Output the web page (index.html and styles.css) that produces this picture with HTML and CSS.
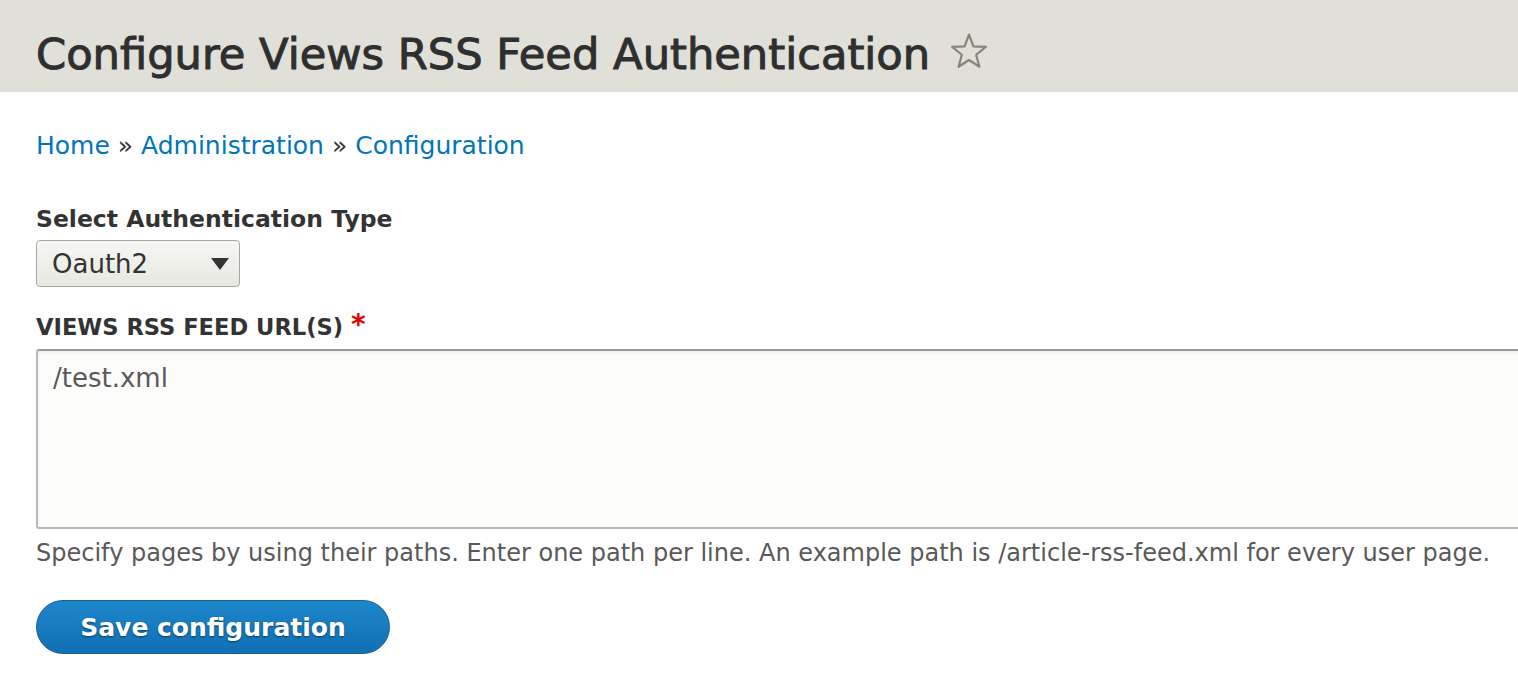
FILE: index.html
```html
<!DOCTYPE html>
<html lang="en">
<head>
<meta charset="utf-8">
<title>Configure Views RSS Feed Authentication</title>
<link rel="stylesheet" href="styles.css">
</head>
<body>
<header class="page-header">
  <h1 class="page-title">Configure Views RSS Feed Authentication</h1>
  <svg class="shortcut-star" width="40" height="40" viewBox="0 0 38 38" aria-hidden="true">
    <path d="M19 2.5 L23.2 13.6 L35 14.2 L25.8 21.6 L28.9 33 L19 26.6 L9.1 33 L12.2 21.6 L3 14.2 L14.8 13.6 Z" fill="none" stroke="#85857a" stroke-width="2.1" stroke-linejoin="round"/>
  </svg>
</header>
<main class="content">
  <nav class="breadcrumb">
    <a href="#">Home</a> <span class="sep">»</span> <a href="#">Administration</a> <span class="sep">»</span> <a href="#">Configuration</a>
  </nav>
  <form class="config-form">
    <div class="form-item">
      <label class="form-label">Select Authentication Type</label>
      <div class="select">
        <span class="select-value">Oauth2</span>
        <span class="select-arrow"></span>
      </div>
    </div>
    <div class="form-item">
      <label class="form-label upper">VIEWS RSS FEED URL(S) <span class="required">*</span></label>
      <div class="textarea">/test.xml</div>
      <div class="description">Specify pages by using their paths. Enter one path per line. An example path is /article-rss-feed.xml for every user page.</div>
    </div>
    <div class="actions">
      <button type="button" class="button-primary">Save configuration</button>
    </div>
  </form>
</main>
</body>
</html>
```
FILE: styles.css
```css
html, body {
  margin: 0;
  padding: 0;
  background: #ffffff;
  font-family: "DejaVu Sans", "Lucida Grande", sans-serif;
  color: #333333;
  overflow: hidden;
}

.page-header {
  height: 92px;
  box-sizing: border-box;
  background: #e0e0d8;
  padding: 29px 36px 0;
  display: flex;
  align-items: flex-start;
}

.page-title {
  margin: 0;
  font-size: 43.2px;
  font-weight: normal;
  line-height: 1.164;
  color: #2f2f2f;
  -webkit-text-stroke: 1px #2f2f2f;
}

.shortcut-star {
  margin-left: 19px;
  margin-top: 3px;
}

.content {
  padding: 0 0 0 36px;
}

.breadcrumb {
  margin-top: 39px;
  font-size: 25px;
  line-height: 30px;
  color: #333333;
}

.breadcrumb a {
  color: #0074bd;
  text-decoration: none;
}

.config-form {
  margin-top: 43px;
}

.form-item {
  margin-bottom: 25px;
}

.form-label {
  display: block;
  font-weight: bold;
  font-size: 23.5px;
  line-height: 30px;
  margin-bottom: 6px;
}

.form-label.upper {
  font-size: 22.6px;
  margin-bottom: 7px;
  margin-top: 2px;
}

.required {
  color: #e00000;
  font-size: 28px;
  vertical-align: top;
  line-height: 26px;
}

.select {
  width: 204px;
  height: 47px;
  box-sizing: border-box;
  border: 1.5px solid #a6a6a6;
  border-radius: 4px;
  background: linear-gradient(#f7f7f3, #e8e8e1);
  display: flex;
  align-items: center;
  justify-content: space-between;
  padding: 0 10px 0 15px;
}

.select-value {
  font-size: 26px;
  color: #333333;
}

.select-arrow {
  width: 0;
  height: 0;
  border-left: 9px solid transparent;
  border-right: 9px solid transparent;
  border-top: 12px solid #333333;
}

.textarea {
  width: calc(100% + 40px);
  height: 180px;
  box-sizing: border-box;
  border: 2px solid #b8b8b8;
  border-top-color: #999999;
  border-radius: 3px;
  background: #fcfcfa;
  box-shadow: inset 0 2px 4px rgba(0, 0, 0, 0.06);
  padding: 12px 15px;
  font-size: 26px;
  line-height: 30px;
  color: #595959;
}

.description {
  margin-top: 9px;
  font-size: 24px;
  line-height: 30px;
  color: #595959;
}

.actions {
  margin-top: 32px;
}

.button-primary {
  width: 354px;
  height: 54px;
  border-radius: 27px;
  border: 1.5px solid #1e5c90;
  background: linear-gradient(#1d86cb, #1170b3);
  color: #ffffff;
  font-family: "DejaVu Sans", sans-serif;
  font-weight: bold;
  font-size: 25px;
  text-shadow: 0 1px 2px rgba(0, 0, 0, 0.5);
  padding: 0;
  cursor: pointer;
}
```
